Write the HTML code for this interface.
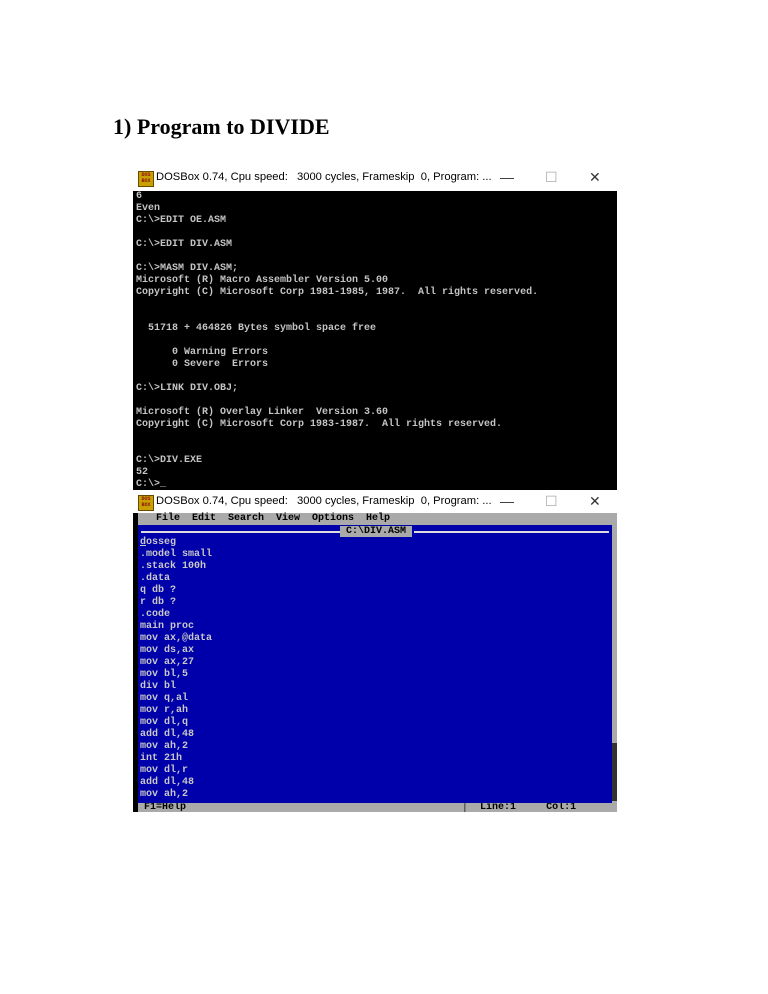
<!DOCTYPE html>
<html><head><style>
body{margin:0;width:768px;height:994px;background:#fff;position:relative;overflow:hidden}
h1{position:absolute;left:113px;top:114px;margin:0;font:bold 22px "Liberation Serif",serif;color:#000;white-space:nowrap}
.tb{position:absolute;left:133px;width:484px;height:24px;background:#fff;font:11.2px "Liberation Sans",sans-serif;color:#000}
.tb .ic{position:absolute;left:5px;top:5px;width:14px;height:14px;background:#c8a000;border:1px solid #6b4a00;font:bold 5px "Liberation Mono",monospace;color:#8b1010;line-height:6px;text-align:center}
.tb .t{position:absolute;top:5px;white-space:pre}
.tb .b{position:absolute;top:3px;font:14px "Liberation Sans",sans-serif;color:#333}
.con{position:absolute;left:133px;top:191px;width:484px;height:300px;background:#000;color:#c4c4c4;font:bold 10px "Liberation Mono",monospace;line-height:12px;white-space:pre;padding-left:3px;box-sizing:border-box}
.ed{position:absolute;left:133px;top:513px;width:484px;height:299px;background:#000}
.menu{position:absolute;left:5px;top:0;width:479px;height:12px;background:#aaa;color:#000;font:bold 10px "Liberation Mono",monospace;line-height:12px;white-space:pre}
.blue{position:absolute;left:5px;top:12px;width:474px;height:278px;background:#0000aa}
.code{position:absolute;left:7px;top:24px;color:#c8c8c8;font:bold 10px "Liberation Mono",monospace;line-height:12px;white-space:pre}
.fname{position:absolute;left:207px;top:13px;background:#aaa;color:#000;font:bold 10px "Liberation Mono",monospace;line-height:11px;padding:0 6px}
.hl{position:absolute;top:18px;height:2px;background:#ddd}
.sb{position:absolute;left:479px;top:12px;width:5px;height:278px;background:#aaa}
.sb2{position:absolute;left:479px;top:230px;width:5px;height:58px;background:#333}
.stat{position:absolute;left:5px;top:290px;width:479px;height:9px;background:#aaa;color:#000;font:bold 10px "Liberation Mono",monospace;line-height:9px;white-space:pre;overflow:hidden}
</style></head><body>
<h1>1) Program to DIVIDE</h1>
<div class="tb" style="top:166px"><div class="ic">DOS<br>BOX</div><div class="t" style="left:23px">DOSBox 0.74, Cpu speed:</div><div class="t" style="left:164px">3000 cycles, Frameskip  0, Program: ...</div><span class="b" style="left:367px">—</span><span class="b" style="left:412px;color:#aaa">☐</span><span class="b" style="left:456px">✕</span></div>
<div class="con">6
Even
C:\>EDIT OE.ASM

C:\>EDIT DIV.ASM

C:\>MASM DIV.ASM;
Microsoft (R) Macro Assembler Version 5.00
Copyright (C) Microsoft Corp 1981-1985, 1987.  All rights reserved.


  51718 + 464826 Bytes symbol space free

      0 Warning Errors
      0 Severe  Errors

C:\>LINK DIV.OBJ;

Microsoft (R) Overlay Linker  Version 3.60
Copyright (C) Microsoft Corp 1983-1987.  All rights reserved.


C:\>DIV.EXE
52
C:\>_</div>
<div class="tb" style="top:490px"><div class="ic">DOS<br>BOX</div><div class="t" style="left:23px">DOSBox 0.74, Cpu speed:</div><div class="t" style="left:164px">3000 cycles, Frameskip  0, Program: ...</div><span class="b" style="left:367px">—</span><span class="b" style="left:412px;color:#aaa">☐</span><span class="b" style="left:456px">✕</span></div>
<div class="ed">
<div class="menu">   File  Edit  Search  View  Options  Help</div>
<div class="blue"></div>
<div class="hl" style="left:8px;width:199px"></div>
<div class="hl" style="left:281px;width:195px"></div>
<div class="fname">C:\DIV.ASM</div>
<div class="sb"></div>
<div class="sb2"></div>
<div class="code"><u>d</u>osseg
.model small
.stack 100h
.data
q db ?
r db ?
.code
main proc
mov ax,@data
mov ds,ax
mov ax,27
mov bl,5
div bl
mov q,al
mov r,ah
mov dl,q
add dl,48
mov ah,2
int 21h
mov dl,r
add dl,48
mov ah,2</div>
<div class="stat"> F1=Help                                              │  Line:1     Col:1</div>
</div>
</body></html>
